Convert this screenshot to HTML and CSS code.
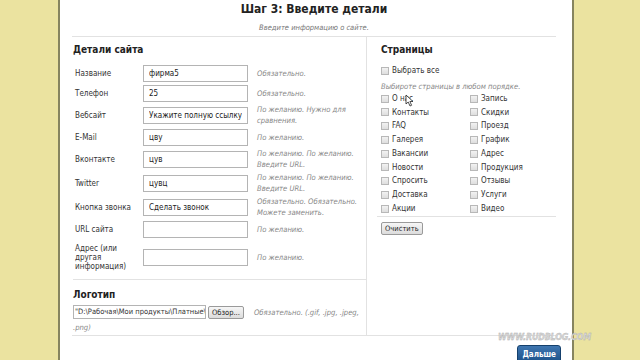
FILE: index.html
```html
<!DOCTYPE html>
<html lang="ru">
<head>
    <meta charset="UTF-8">
    <title>Шаг 3: Введите детали</title>
    <link rel="stylesheet" href="styles.css">
</head>
<body>
    <div class="page">
        <h1 class="title">Шаг 3: Введите детали</h1>
        <p class="subtitle">Введите информацию о сайте.</p>

        <div class="main">
            <div class="details">
                <h2>Детали сайта</h2>
                <div class="rows">
                    <div class="row">
                        <label>Название</label>
                        <input type="text" value="фирма5">
                        <span class="hint">Обязательно.</span>
                    </div>
                    <div class="row">
                        <label>Телефон</label>
                        <input type="text" value="25">
                        <span class="hint">Обязательно.</span>
                    </div>
                    <div class="row">
                        <label>Вебсайт</label>
                        <input type="text" value="Укажите полную ссылку">
                        <span class="hint">По желанию. Нужно для сравнения.</span>
                    </div>
                    <div class="row">
                        <label>E-Mail</label>
                        <input type="text" value="цву">
                        <span class="hint">По желанию.</span>
                    </div>
                    <div class="row">
                        <label>Вконтакте</label>
                        <input type="text" value="цув">
                        <span class="hint">По желанию. По желанию. Введите URL.</span>
                    </div>
                    <div class="row">
                        <label>Twitter</label>
                        <input type="text" value="цувц">
                        <span class="hint">По желанию. По желанию. Введите URL.</span>
                    </div>
                    <div class="row">
                        <label>Кнопка звонка</label>
                        <input type="text" value="Сделать звонок">
                        <span class="hint">Обязательно. Обязательно. Можете заменить.</span>
                    </div>
                    <div class="row">
                        <label>URL сайта</label>
                        <input type="text" value="">
                        <span class="hint">По желанию.</span>
                    </div>
                    <div class="row tall">
                        <label>Адрес (или другая информация)</label>
                        <input type="text" value="">
                        <span class="hint">По желанию.</span>
                    </div>
                </div>

                <div class="logo">
                    <h2>Логотип</h2>
                    <div class="file-line">
                        <span class="file-path">"D:\Рабочая\Мои продукты\Платные\</span>
                        <button class="btn-gray">Обзор...</button>
                        <span class="hint">Обязательно. (.gif, .jpg, .jpeg,</span>
                    </div>
                    <p class="hint png">.png)</p>
                </div>
            </div>

            <div class="pages">
                <h2>Страницы</h2>
                <label class="check"><input type="checkbox"> Выбрать все</label>
                <p class="hint">Выбироте страницы в любом порядке.</p>
                <div class="check-grid">
                    <label class="check"><input type="checkbox"> О нас</label>
                    <label class="check"><input type="checkbox"> Запись</label>
                    <label class="check"><input type="checkbox"> Контакты</label>
                    <label class="check"><input type="checkbox"> Скидки</label>
                    <label class="check"><input type="checkbox"> FAQ</label>
                    <label class="check"><input type="checkbox"> Проезд</label>
                    <label class="check"><input type="checkbox"> Галерея</label>
                    <label class="check"><input type="checkbox"> График</label>
                    <label class="check"><input type="checkbox"> Вакансии</label>
                    <label class="check"><input type="checkbox"> Адрес</label>
                    <label class="check"><input type="checkbox"> Новости</label>
                    <label class="check"><input type="checkbox"> Продукция</label>
                    <label class="check"><input type="checkbox"> Спросить</label>
                    <label class="check"><input type="checkbox"> Отзывы</label>
                    <label class="check"><input type="checkbox"> Доставка</label>
                    <label class="check"><input type="checkbox"> Услуги</label>
                    <label class="check"><input type="checkbox"> Акции</label>
                    <label class="check"><input type="checkbox"> Видео</label>
                </div>
                <div class="clear-line">
                    <button class="btn-gray">Очистить</button>
                </div>
                <!-- курсор мыши поверх "О нас" -->
                <svg class="cursor" width="9" height="13" viewBox="0 0 9 13">
                    <path d="M1 1 L1 10 L3.2 8 L5 12 L6.6 11.3 L4.9 7.5 L8 7.5 Z" fill="#fff" stroke="#222" stroke-width="0.8"/>
                </svg>
            </div>
        </div>

        <div class="footer">
            <span class="watermark">WWW.RUDBLOG.COM</span>
            <button class="btn-next">Дальше</button>
        </div>
    </div>
</body>
</html>
```

FILE: styles.css
```css
* {
    box-sizing: border-box;
}

body {
    margin: 0;
    background-color: #ebe3a0;
    font-family: 'DejaVu Sans Condensed', 'DejaVu Sans', sans-serif;
    color: #333;
    overflow: hidden;
}

.page {
    margin-left: 58px;
    width: 516px;
    height: 360px;
    background: #fff;
    border-left: 2px solid #86845f;
    border-right: 2px solid #86845f;
    padding: 0 16px 0 12px;
}

.title {
    margin: 0;
    font-size: 12px;
    line-height: 18px;
    font-weight: bold;
    text-align: center;
    color: #222;
}

.subtitle {
    margin: 5px 0 0;
    font-size: 7.5px;
    line-height: 10px;
    font-style: italic;
    text-align: center;
    color: #777;
}

.main {
    margin-top: 3px;
    display: grid;
    grid-template-columns: 294px 1fr;
    height: 300px;
    border-top: 1px solid #e2e2e2;
    border-bottom: 1px solid #e2e2e2;
}

h2 {
    margin: 0;
    font-size: 10px;
    line-height: 14px;
    font-weight: bold;
    color: #222;
}

.hint {
    margin: 0;
    font-size: 7.6px;
    line-height: 11px;
    font-style: italic;
    color: #888;
}

/* левая колонка */
.details {
    display: flex;
    flex-direction: column;
    padding: 6px 0 0 1px;
}

.rows {
    margin-top: 6px;
    display: flex;
    flex-direction: column;
}

.row {
    display: grid;
    grid-template-columns: 70px 105px 1fr;
    align-items: center;
    min-height: 20px;
}

.row.tall {
    padding-top: 5px;
}

.row label {
    padding-left: 2px;
    font-size: 8px;
    line-height: 9px;
    color: #333;
}

.row input {
    width: 105px;
    height: 17px;
    margin: 0;
    padding: 0 5px;
    border: 1px solid #b4b4b4;
    font-family: inherit;
    font-size: 8px;
    color: #222;
}

.row .hint {
    padding: 1px 2px 1px 9px;
}

.logo {
    margin-top: auto;
    border-top: 1px solid #e2e2e2;
    padding: 8px 0 2px;
}

.file-line {
    margin-top: 3px;
    display: flex;
    align-items: center;
    gap: 2px;
}

.file-path {
    flex: none;
    width: 133px;
    height: 14px;
    border: 1px solid #b4b4b4;
    padding: 0 1px;
    font-size: 7.5px;
    line-height: 12px;
    white-space: nowrap;
    overflow: hidden;
    color: #333;
}

.file-line .hint {
    margin-left: 8px;
    white-space: nowrap;
}

.png {
    margin-top: 3px;
}

.btn-gray {
    height: 13px;
    padding: 0 3px;
    border: 1px solid #9a9a9a;
    border-radius: 2px;
    background: linear-gradient(#f6f6f6, #dcdcdc);
    font-family: inherit;
    font-size: 7.5px;
    line-height: 11px;
    color: #222;
}

/* правая колонка */
.pages {
    position: relative;
    border-left: 1px solid #e2e2e2;
    padding: 6px 0 0 14px;
}

.check {
    display: flex;
    align-items: center;
    gap: 3px;
    font-size: 8px;
    line-height: 13.75px;
    color: #333;
}

.check input {
    appearance: none;
    width: 8px;
    height: 8px;
    margin: 0;
    border: 1px solid #b8b8b8;
    background: linear-gradient(#f2f2f2, #dedede);
}

.pages > .check {
    margin-top: 7px;
}

.pages .hint {
    margin-top: 4px;
    line-height: 10px;
}

.check-grid {
    display: grid;
    grid-template-columns: 89px 1fr;
}

.clear-line {
    display: flex;
    margin-left: -4px;
    border-top: 1px solid #e2e2e2;
    padding: 5px 0 0 4px;
}

.cursor {
    position: absolute;
    left: 38px;
    top: 57px;
}

/* низ */
.footer {
    position: relative;
    display: flex;
    justify-content: flex-end;
    margin-right: -5px;
    padding-top: 9px;
}

.watermark {
    position: absolute;
    right: -30px;
    top: -3px;
    font-family: 'DejaVu Sans', sans-serif;
    font-size: 8px;
    font-style: italic;
    font-weight: bold;
    letter-spacing: -0.2px;
    color: #d8d8d8;
    -webkit-text-stroke: 0.3px #aaa;
}

.btn-next {
    height: 18px;
    padding: 0 4px;
    border: 1px solid #15406c;
    border-radius: 3px;
    background: linear-gradient(#3f76b0, #1c5189);
    font-family: inherit;
    font-size: 8px;
    font-weight: bold;
    color: #fff;
}
```
